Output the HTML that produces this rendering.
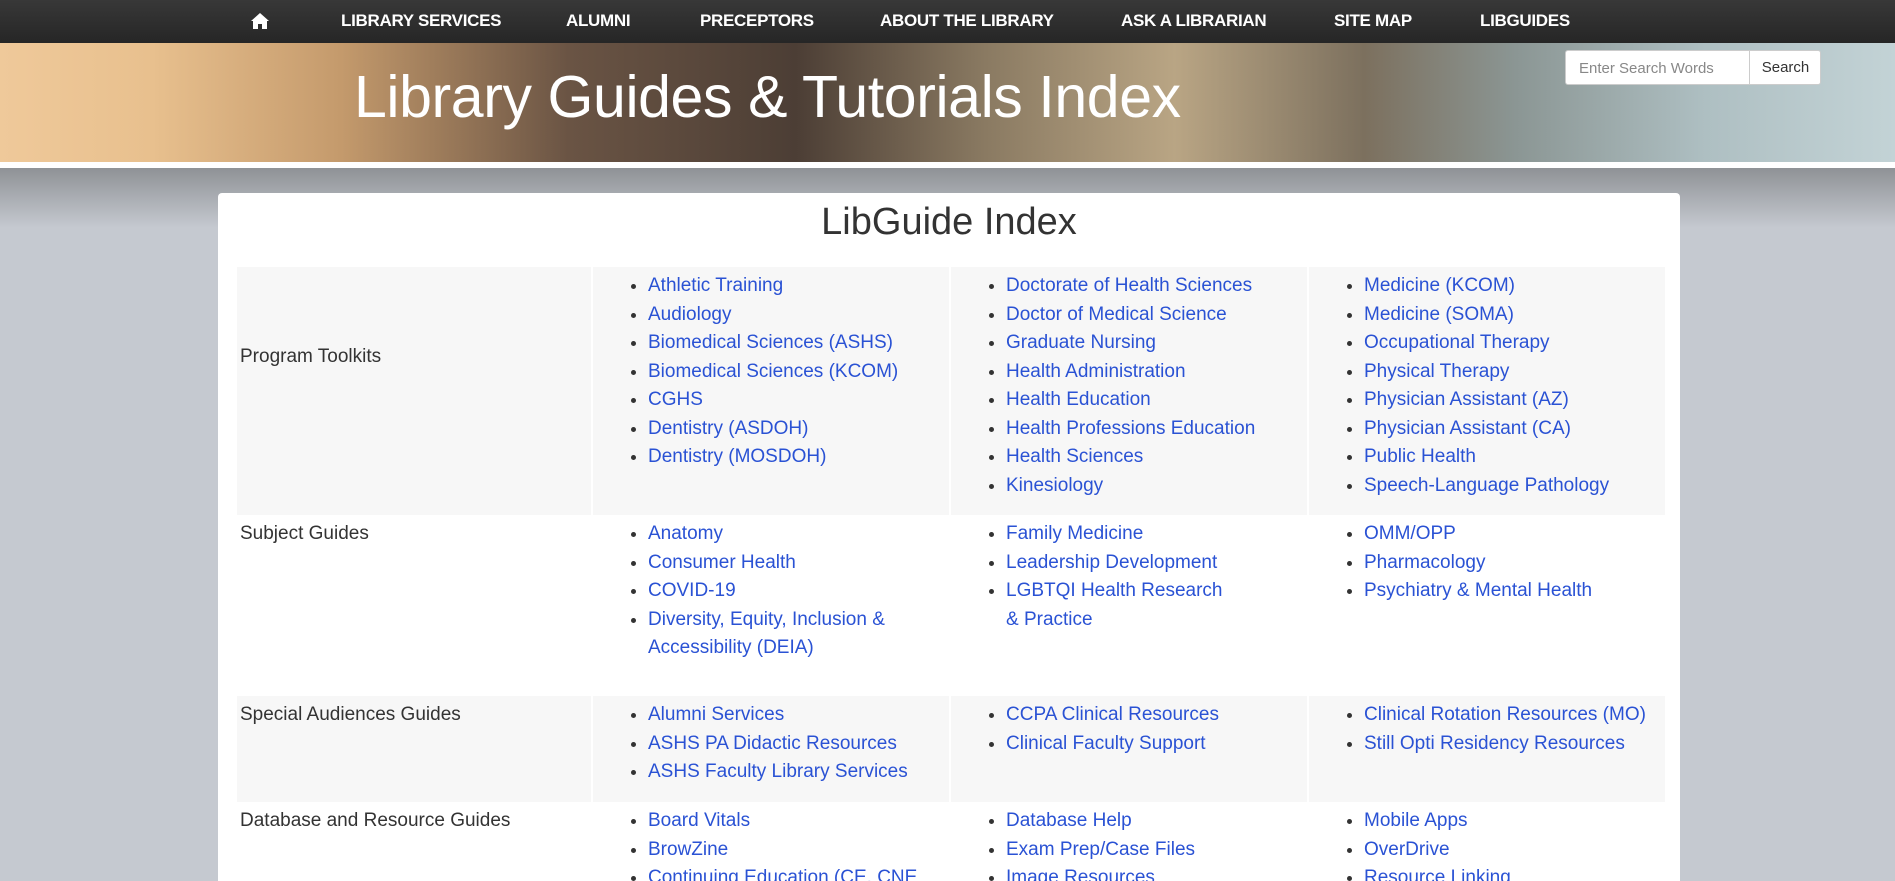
<!DOCTYPE html>
<html style="overflow:hidden;height:881px"><head><meta charset="utf-8"><style>
*{margin:0;padding:0;box-sizing:border-box}
body{width:1895px;height:881px;overflow:hidden;font-family:"Liberation Sans",Arial,sans-serif;background:#c5c9d0;position:relative}
.nav{position:absolute;left:0;top:0;width:1895px;height:43px;background:linear-gradient(#383838,#262626);}
.nav span{position:absolute;top:11px;color:#fff;font-size:17px;font-weight:bold;letter-spacing:-0.3px;white-space:nowrap}
.banner{position:absolute;left:0;top:43px;width:1895px;height:119px;background:linear-gradient(90deg,#efc99a 0%,#e8c08e 8%,#c49a6c 18%,#6a5444 30%,#4c3e35 42%,#8a7a62 52%,#b9a584 62%,#7c705e 72%,#8b9694 80%,#aebfc2 90%,#c3d3d6 100%)}
.banner h1{position:absolute;left:354px;top:20px;font-size:59px;font-weight:normal;color:#fff;white-space:nowrap;letter-spacing:-0.4px}
.strip{position:absolute;left:0;top:162px;width:1895px;height:6px;background:#fff}
.shade{position:absolute;left:0;top:168px;width:1895px;height:60px;background:linear-gradient(#8f9296,#c5c9d0)}
.search{position:absolute;left:1565px;top:50px;width:256px;height:35px;background:#fff;border:1px solid #ccc;border-radius:3px}
.search .ph{position:absolute;left:13px;top:9px;font-size:15px;color:#888}
.search .btn{position:absolute;left:183px;top:0;width:72px;height:33px;border-left:1px solid #ccc;font-size:15px;color:#333;text-align:center;line-height:33px}
.card{position:absolute;left:218px;top:193px;width:1462px;height:688px;background:#fff;border-radius:4px 4px 0 0;overflow:hidden}
.card h2{position:absolute;left:0;width:100%;top:8px;text-align:center;font-size:38px;font-weight:normal;color:#333}
table{position:absolute;left:17px;top:74px;border-collapse:separate;border-spacing:2px 0}
td{vertical-align:top;font-size:19px;color:#333;line-height:28.5px}
td.l{width:354px;padding-left:3px}
td.c{width:356px}
tr.s td{background:#f7f7f7}
ul{list-style:disc;padding-left:55px;margin-top:5px}
li{color:#333}
li a{color:#2a52d4;text-decoration:none}
</style></head><body>
<div class="nav">
<svg style="position:absolute;left:250px;top:12px" width="20" height="18" viewBox="0 0 20 18"><path d="M10 1 L1 9 L3 9 L3 17 L8 17 L8 12 L12 12 L12 17 L17 17 L17 9 L19 9 Z" fill="#fff"/></svg>
<span style="left:341px">LIBRARY SERVICES</span>
<span style="left:566px">ALUMNI</span>
<span style="left:700px">PRECEPTORS</span>
<span style="left:880px">ABOUT THE LIBRARY</span>
<span style="left:1121px">ASK A LIBRARIAN</span>
<span style="left:1334px">SITE MAP</span>
<span style="left:1480px">LIBGUIDES</span>
</div>
<div class="banner"><h1>Library Guides &amp; Tutorials Index</h1></div>
<div class="search"><span class="ph">Enter Search Words</span><div class="btn">Search</div></div>
<div class="strip"></div><div class="shade"></div>
<div class="card"><h2>LibGuide Index</h2>
<table>
<tr class="s" style="height:248px"><td class="l" style="padding-top:76px">Program Toolkits</td>
<td class="c"><ul><li><a>Athletic Training</a></li><li><a>Audiology</a></li><li><a>Biomedical Sciences (ASHS)</a></li><li><a>Biomedical Sciences (KCOM)</a></li><li><a>CGHS</a></li><li><a>Dentistry (ASDOH)</a></li><li><a>Dentistry (MOSDOH)</a></li></ul></td>
<td class="c"><ul><li><a>Doctorate of Health Sciences</a></li><li><a>Doctor of Medical Science</a></li><li><a>Graduate Nursing</a></li><li><a>Health Administration</a></li><li><a>Health Education</a></li><li><a>Health Professions Education</a></li><li><a>Health Sciences</a></li><li><a>Kinesiology</a></li></ul></td>
<td class="c"><ul><li><a>Medicine (KCOM)</a></li><li><a>Medicine (SOMA)</a></li><li><a>Occupational Therapy</a></li><li><a>Physical Therapy</a></li><li><a>Physician Assistant (AZ)</a></li><li><a>Physician Assistant (CA)</a></li><li><a>Public Health</a></li><li><a>Speech-Language Pathology</a></li></ul></td></tr>
<tr style="height:181px"><td class="l" style="padding-top:5px">Subject Guides</td>
<td class="c"><ul><li><a>Anatomy</a></li><li><a>Consumer Health</a></li><li><a>COVID-19</a></li><li><a>Diversity, Equity, Inclusion &amp;<br>Accessibility (DEIA)</a></li></ul></td>
<td class="c"><ul><li><a>Family Medicine</a></li><li><a>Leadership Development</a></li><li><a>LGBTQI Health Research<br>&amp; Practice</a></li></ul></td>
<td class="c"><ul><li><a>OMM/OPP</a></li><li><a>Pharmacology</a></li><li><a>Psychiatry &amp; Mental Health</a></li></ul></td></tr>
<tr class="s" style="height:106px"><td class="l" style="padding-top:5px">Special Audiences Guides</td>
<td class="c"><ul><li><a>Alumni Services</a></li><li><a>ASHS PA Didactic Resources</a></li><li><a>ASHS Faculty Library Services</a></li></ul></td>
<td class="c"><ul><li><a>CCPA Clinical Resources</a></li><li><a>Clinical Faculty Support</a></li></ul></td>
<td class="c"><ul><li><a>Clinical Rotation Resources (MO)</a></li><li><a>Still Opti Residency Resources</a></li></ul></td></tr>
<tr style="height:120px"><td class="l" style="padding-top:5px">Database and Resource Guides</td>
<td class="c"><ul><li><a>Board Vitals</a></li><li><a>BrowZine</a></li><li><a>Continuing Education (CE, CNE</a></li></ul></td>
<td class="c"><ul><li><a>Database Help</a></li><li><a>Exam Prep/Case Files</a></li><li><a>Image Resources</a></li></ul></td>
<td class="c"><ul><li><a>Mobile Apps</a></li><li><a>OverDrive</a></li><li><a>Resource Linking</a></li></ul></td></tr>
</table></div>
</body></html>
